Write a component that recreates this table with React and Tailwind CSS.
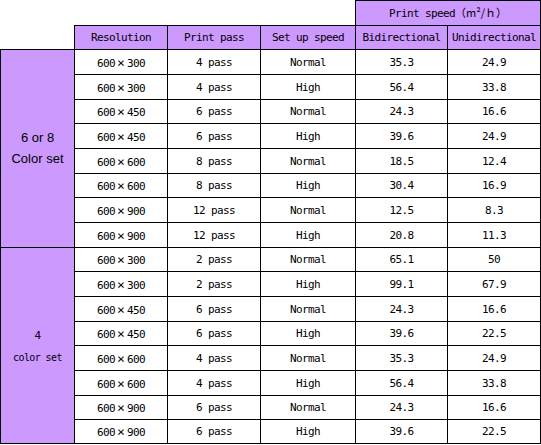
import React from "react";

const rows1 = [
  ["300", "4 pass", "Normal", "35.3", "24.9"],
  ["300", "4 pass", "High", "56.4", "33.8"],
  ["450", "6 pass", "Normal", "24.3", "16.6"],
  ["450", "6 pass", "High", "39.6", "24.9"],
  ["600", "8 pass", "Normal", "18.5", "12.4"],
  ["600", "8 pass", "High", "30.4", "16.9"],
  ["900", "12 pass", "Normal", "12.5", "8.3"],
  ["900", "12 pass", "High", "20.8", "11.3"],
];
const rows2 = [
  ["300", "2 pass", "Normal", "65.1", "50"],
  ["300", "2 pass", "High", "99.1", "67.9"],
  ["450", "6 pass", "Normal", "24.3", "16.6"],
  ["450", "6 pass", "High", "39.6", "22.5"],
  ["600", "4 pass", "Normal", "35.3", "24.9"],
  ["600", "4 pass", "High", "56.4", "33.8"],
  ["900", "6 pass", "Normal", "24.3", "16.6"],
  ["900", "6 pass", "High", "39.6", "22.5"],
];
const h1 = ["h-[25px]", "h-[25px]", "h-[24px]", "h-[25px]", "h-[25px]", "h-[24px]", "h-[25px]", "h-[25px]"];
const h2 = ["h-[24px]", "h-[25px]", "h-[25px]", "h-[24px]", "h-[25px]", "h-[25px]", "h-[24px]", "h-[24px]"];

const td = "border border-black text-center align-middle p-0 whitespace-pre";
const th = "border border-black bg-[#cc99ff] text-center align-middle p-0 font-normal whitespace-pre";

function Res({ v }) {
  return (
    <span>
      600<span className="inline-block w-[12px] text-center tracking-normal text-[13px]">×</span>{v}
    </span>
  );
}

function Rows({ rows, heights, label }) {
  return rows.map((r, i) => (
    <tr key={i} className={heights[i]}>
      {i === 0 && (
        <td rowSpan={8} className={th}>
          {label}
        </td>
      )}
      <td className={td}>
        <Res v={r[0]} />
      </td>
      <td className={td}>{r[1]}</td>
      <td className={td}>{r[2]}</td>
      <td className={td}>{r[3]}</td>
      <td className={td}>{r[4]}</td>
    </tr>
  ));
}

export default function App() {
  return (
    <div className="w-[541px] h-[445px] bg-white overflow-hidden">
      <table
        className="table-fixed border-collapse w-[540px] text-[11px] tracking-[-0.62px] text-black leading-none"
        style={{ fontFamily: '"DejaVu Sans Mono", "Noto Sans CJK JP", monospace' }}
      >
        <colgroup>
          <col className="w-[74px]" />
          <col className="w-[93px]" />
          <col className="w-[93px]" />
          <col className="w-[95px]" />
          <col className="w-[92px]" />
          <col className="w-[93px]" />
        </colgroup>
        <tbody>
          <tr className="h-[25px]">
            <td colSpan={4} className="p-0"></td>
            <th colSpan={2} className={th}>
              Print speed
              <span className="tracking-normal" style={{ fontFamily: '"Noto Sans CJK JP", sans-serif' }}>
                （m²/ｈ）
              </span>
            </th>
          </tr>
          <tr className="h-[24px]">
            <td className="p-0"></td>
            <th className={th}>Resolution</th>
            <th className={th}>Print pass</th>
            <th className={th}>Set up speed</th>
            <th className={th}>Bidirectional</th>
            <th className={th}>Unidirectional</th>
          </tr>
          <Rows
            rows={rows1}
            heights={h1}
            label={
              <div
                className="flex flex-col items-center gap-[8px] text-[13px] tracking-normal pb-[2px]"
                style={{ fontFamily: '"Liberation Sans", Arial, sans-serif' }}
              >
                <span>6 or 8</span>
                <span>Color set</span>
              </div>
            }
          />
          <Rows
            rows={rows2}
            heights={h2}
            label={
              <div className="flex flex-col items-center gap-[12px] pt-[2px]">
                <span>4</span>
                <span className="text-[10px] tracking-[-0.6px]">color set</span>
              </div>
            }
          />
        </tbody>
      </table>
    </div>
  );
}
